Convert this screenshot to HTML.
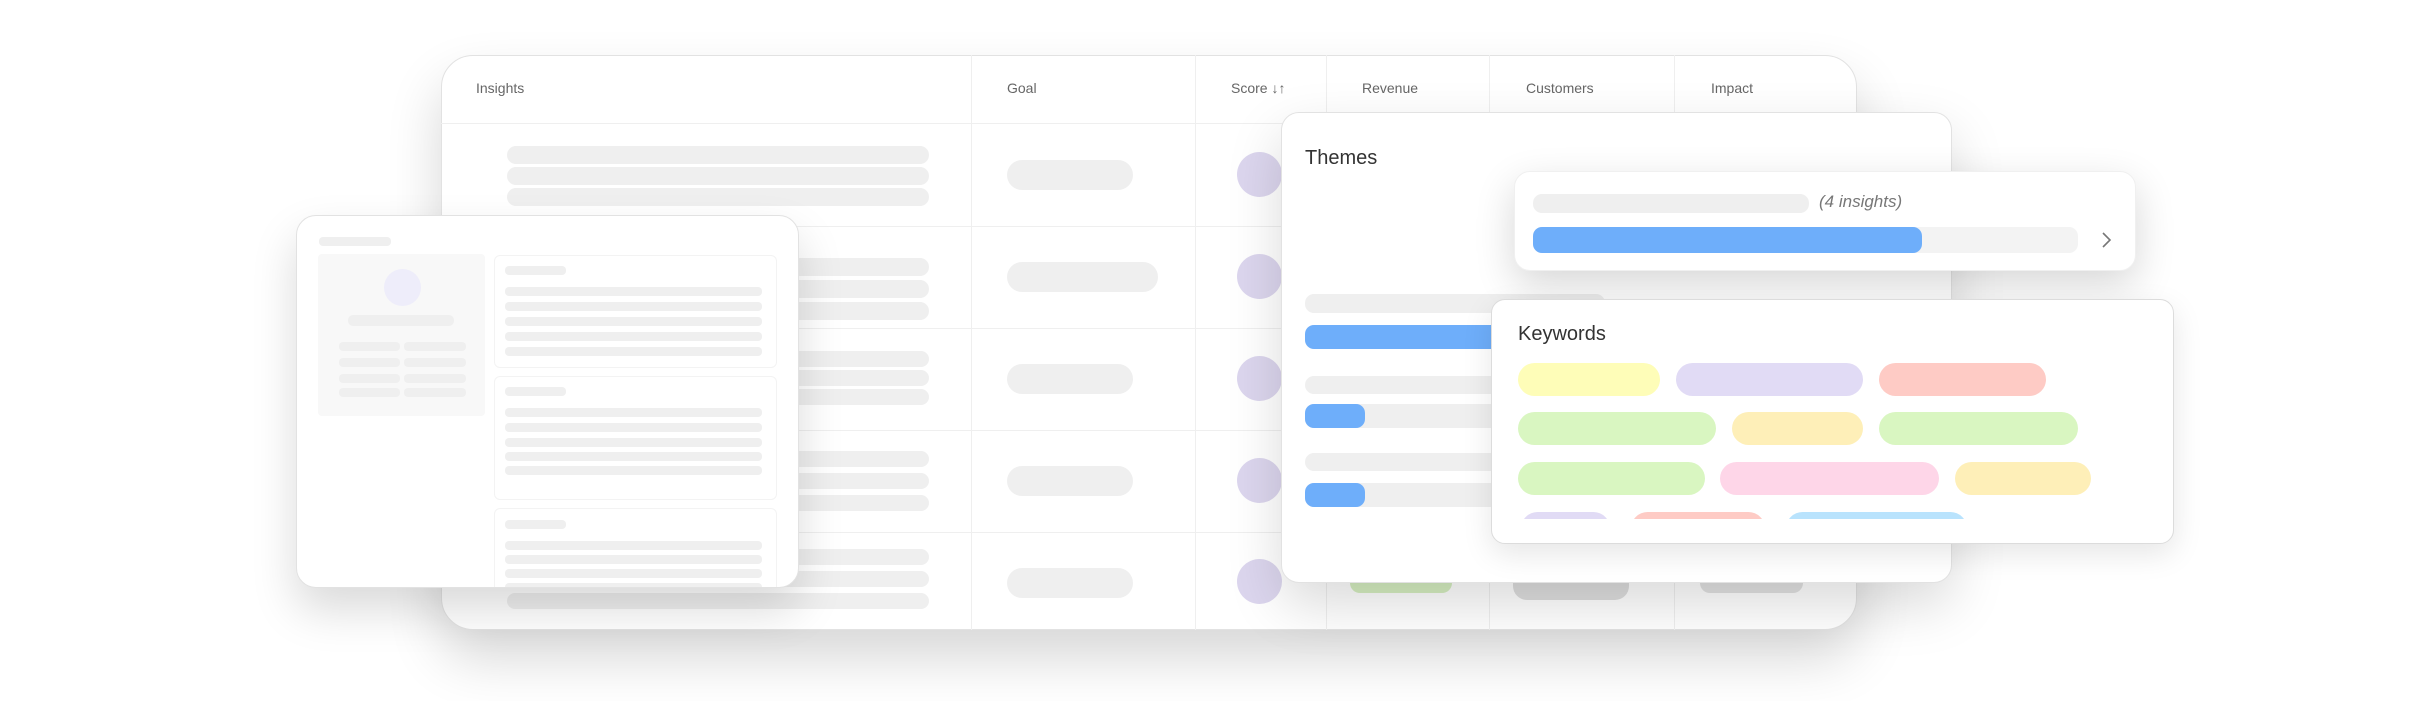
<!DOCTYPE html>
<html><head><meta charset="utf-8"><style>
*{margin:0;padding:0;box-sizing:border-box}
body{width:2432px;height:701px;background:#fff;position:relative;overflow:hidden;font-family:"Liberation Sans",sans-serif}
.a{position:absolute}
.g{position:absolute;background:#efefef;border-radius:9px}
.card{position:absolute;background:#fff;border:1.5px solid #e2e2e2}
.vl{position:absolute;width:1px;background:#efefef}
.hl{position:absolute;height:1px;background:#efefef}
.c{position:absolute;width:45px;height:45px;border-radius:50%;background:#dcd6ee}
.th{position:absolute;top:80px;font-size:14px;color:#666}
.p{position:absolute;height:33px;border-radius:17px}
</style></head><body>

<!-- main table -->
<div class="card" style="left:441px;top:55px;width:1416px;height:575px;border-radius:32px;box-shadow:0 28px 55px rgba(0,0,0,0.16);overflow:hidden">
</div>
<div class="a" style="left:441px;top:55px;width:1416px;height:575px;overflow:hidden;border-radius:32px">
  <div class="hl" style="left:0;top:68px;width:1416px"></div>
  <div class="hl" style="left:0;top:171px;width:1416px"></div>
  <div class="hl" style="left:0;top:273px;width:1416px"></div>
  <div class="hl" style="left:0;top:375px;width:1416px"></div>
  <div class="hl" style="left:0;top:477px;width:1416px"></div>
  <div class="vl" style="left:530px;top:0;height:575px"></div>
  <div class="vl" style="left:754px;top:0;height:575px"></div>
  <div class="vl" style="left:885px;top:0;height:575px"></div>
  <div class="vl" style="left:1048px;top:0;height:575px"></div>
  <div class="vl" style="left:1233px;top:0;height:575px"></div>
</div>
<div class="th" style="left:476px">Insights</div>
<div class="th" style="left:1007px">Goal</div>
<div class="th" style="left:1231px">Score ↓↑</div>
<div class="th" style="left:1362px">Revenue</div>
<div class="th" style="left:1526px">Customers</div>
<div class="th" style="left:1711px">Impact</div>

<!-- row bars -->
<div class="g" style="left:507px;top:146px;width:422px;height:18px"></div>
<div class="g" style="left:507px;top:167px;width:422px;height:18px"></div>
<div class="g" style="left:507px;top:188px;width:422px;height:18px"></div>
<div class="g" style="left:507px;top:258px;width:422px;height:18px"></div>
<div class="g" style="left:507px;top:280px;width:422px;height:18px"></div>
<div class="g" style="left:507px;top:302px;width:422px;height:18px"></div>
<div class="g" style="left:507px;top:351px;width:422px;height:16px"></div>
<div class="g" style="left:507px;top:370px;width:422px;height:16px"></div>
<div class="g" style="left:507px;top:389px;width:422px;height:16px"></div>
<div class="g" style="left:507px;top:451px;width:422px;height:16px"></div>
<div class="g" style="left:507px;top:473px;width:422px;height:16px"></div>
<div class="g" style="left:507px;top:495px;width:422px;height:16px"></div>
<div class="g" style="left:507px;top:549px;width:422px;height:16px"></div>
<div class="g" style="left:507px;top:571px;width:422px;height:16px"></div>
<div class="g" style="left:507px;top:593px;width:422px;height:16px"></div>

<div class="g" style="left:1007px;top:160px;width:126px;height:30px;border-radius:15px"></div>
<div class="g" style="left:1007px;top:262px;width:151px;height:30px;border-radius:15px"></div>
<div class="g" style="left:1007px;top:364px;width:126px;height:30px;border-radius:15px"></div>
<div class="g" style="left:1007px;top:466px;width:126px;height:30px;border-radius:15px"></div>
<div class="g" style="left:1007px;top:568px;width:126px;height:30px;border-radius:15px"></div>

<div class="c" style="left:1237px;top:152px"></div>
<div class="c" style="left:1237px;top:254px"></div>
<div class="c" style="left:1237px;top:356px"></div>
<div class="c" style="left:1237px;top:458px"></div>
<div class="c" style="left:1237px;top:559px"></div>

<div class="a" style="left:1350px;top:570px;width:102px;height:23px;background:#d6efc1;border-radius:10px"></div>
<div class="a" style="left:1513px;top:570px;width:116px;height:30px;background:#dedede;border-radius:14px"></div>
<div class="a" style="left:1700px;top:570px;width:103px;height:23px;background:#e2e2e2;border-radius:10px"></div>

<!-- left overlay card -->
<div class="card" style="left:296px;top:215px;width:503px;height:373px;border-radius:20px;box-shadow:0 22px 45px rgba(0,0,0,0.15);overflow:hidden">
  <div class="g" style="left:22px;top:21px;width:72px;height:9px;border-radius:4px"></div>
  <div class="a" style="left:21px;top:38px;width:167px;height:162px;background:#f8f8f8;border-radius:4px">
    <div class="a" style="left:66px;top:15px;width:37px;height:37px;border-radius:50%;background:#eeedfa"></div>
    <div class="g" style="left:30px;top:61px;width:106px;height:11px;border-radius:5px"></div>
    <div class="g" style="left:21px;top:88px;width:61px;height:9px;border-radius:4px"></div>
    <div class="g" style="left:86px;top:88px;width:62px;height:9px;border-radius:4px"></div>
    <div class="g" style="left:21px;top:104px;width:61px;height:9px;border-radius:4px"></div>
    <div class="g" style="left:86px;top:104px;width:62px;height:9px;border-radius:4px"></div>
    <div class="g" style="left:21px;top:120px;width:61px;height:9px;border-radius:4px"></div>
    <div class="g" style="left:86px;top:120px;width:62px;height:9px;border-radius:4px"></div>
    <div class="g" style="left:21px;top:134px;width:61px;height:9px;border-radius:4px"></div>
    <div class="g" style="left:86px;top:134px;width:62px;height:9px;border-radius:4px"></div>
  </div>
  <div class="a" style="left:197px;top:39px;width:283px;height:113px;border:1px solid #f3f3f3;border-radius:6px">
    <div class="g" style="left:10px;top:10px;width:61px;height:9px;border-radius:4px"></div>
    <div class="g" style="left:10px;top:31px;width:257px;height:9px;border-radius:4px"></div>
    <div class="g" style="left:10px;top:46px;width:257px;height:9px;border-radius:4px"></div>
    <div class="g" style="left:10px;top:61px;width:257px;height:9px;border-radius:4px"></div>
    <div class="g" style="left:10px;top:76px;width:257px;height:9px;border-radius:4px"></div>
    <div class="g" style="left:10px;top:91px;width:257px;height:9px;border-radius:4px"></div>
  </div>
  <div class="a" style="left:197px;top:160px;width:283px;height:124px;border:1px solid #f3f3f3;border-radius:6px">
    <div class="g" style="left:10px;top:10px;width:61px;height:9px;border-radius:4px"></div>
    <div class="g" style="left:10px;top:31px;width:257px;height:9px;border-radius:4px"></div>
    <div class="g" style="left:10px;top:46px;width:257px;height:9px;border-radius:4px"></div>
    <div class="g" style="left:10px;top:61px;width:257px;height:9px;border-radius:4px"></div>
    <div class="g" style="left:10px;top:75px;width:257px;height:9px;border-radius:4px"></div>
    <div class="g" style="left:10px;top:89px;width:257px;height:9px;border-radius:4px"></div>
  </div>
  <div class="a" style="left:197px;top:292px;width:283px;height:124px;border:1px solid #f3f3f3;border-radius:6px">
    <div class="g" style="left:10px;top:11px;width:61px;height:9px;border-radius:4px"></div>
    <div class="g" style="left:10px;top:32px;width:257px;height:9px;border-radius:4px"></div>
    <div class="g" style="left:10px;top:46px;width:257px;height:9px;border-radius:4px"></div>
    <div class="g" style="left:10px;top:60px;width:257px;height:9px;border-radius:4px"></div>
    <div class="g" style="left:10px;top:74px;width:257px;height:9px;border-radius:4px"></div>
  </div>
</div>

<!-- themes card -->
<div class="card" style="left:1281px;top:112px;width:671px;height:471px;border-radius:18px;box-shadow:0 22px 55px rgba(0,0,0,0.15);overflow:hidden">
  <div class="a" style="left:23px;top:34px;font-size:20px;color:#333;font-weight:500">Themes</div>
  <div class="g" style="left:23px;top:181px;width:300px;height:19px"></div>
  <div class="a" style="left:23px;top:212px;width:300px;height:24px;background:#6eaefa;border-radius:9px"></div>
  <div class="g" style="left:23px;top:263px;width:300px;height:18px"></div>
  <div class="g" style="left:23px;top:291px;width:300px;height:24px"></div>
  <div class="a" style="left:23px;top:291px;width:60px;height:24px;background:#6eaefa;border-radius:9px"></div>
  <div class="g" style="left:23px;top:340px;width:300px;height:18px"></div>
  <div class="g" style="left:23px;top:370px;width:300px;height:24px"></div>
  <div class="a" style="left:23px;top:370px;width:60px;height:24px;background:#6eaefa;border-radius:9px"></div>
</div>

<!-- insight popup -->
<div class="card" style="left:1514px;top:171px;width:622px;height:100px;border-radius:16px;border-color:#f0f0f0;box-shadow:0 14px 40px rgba(0,0,0,0.16)">
  <div class="g" style="left:18px;top:22px;width:276px;height:19px"></div>
  <div class="a" style="left:304px;top:20px;font-size:17px;color:#777;font-style:italic">(4 insights)</div>
  <div class="g" style="left:18px;top:55px;width:545px;height:26px;background:#f3f3f3"></div>
  <div class="a" style="left:18px;top:55px;width:389px;height:26px;background:#6eaefa;border-radius:9px"></div>
  <svg class="a" style="left:584px;top:58px" width="14" height="20" viewBox="0 0 14 20"><path d="M4 3 L11 10 L4 17" fill="none" stroke="#777" stroke-width="1.6"/></svg>
</div>

<!-- keywords card -->
<div class="card" style="left:1491px;top:299px;width:683px;height:245px;border-radius:14px;border-color:#dcdcdc;box-shadow:0 10px 30px rgba(0,0,0,0.1);overflow:hidden">
  <div class="a" style="left:26px;top:23px;font-size:20px;color:#333;font-weight:500">Keywords</div>
  <div class="a" style="left:0;top:0;width:683px;height:219px;overflow:hidden">
    <div class="p" style="left:26px;top:63px;width:142px;background:#fefdb8"></div>
    <div class="p" style="left:184px;top:63px;width:187px;background:#e1dbf5"></div>
    <div class="p" style="left:387px;top:63px;width:167px;background:#fecbc5"></div>
    <div class="p" style="left:26px;top:112px;width:198px;background:#d9f6c1"></div>
    <div class="p" style="left:240px;top:112px;width:131px;background:#feefb8"></div>
    <div class="p" style="left:387px;top:112px;width:199px;background:#d9f6c1"></div>
    <div class="p" style="left:26px;top:162px;width:187px;background:#d9f6c1"></div>
    <div class="p" style="left:228px;top:162px;width:219px;background:#fed6e8"></div>
    <div class="p" style="left:463px;top:162px;width:136px;background:#feefb8"></div>
    <div class="p" style="left:29px;top:212px;width:89px;background:#e1dbf5"></div>
    <div class="p" style="left:139px;top:212px;width:134px;background:#fecbc5"></div>
    <div class="p" style="left:294px;top:212px;width:181px;background:#b9e3fd"></div>
  </div>
</div>
</body></html>
